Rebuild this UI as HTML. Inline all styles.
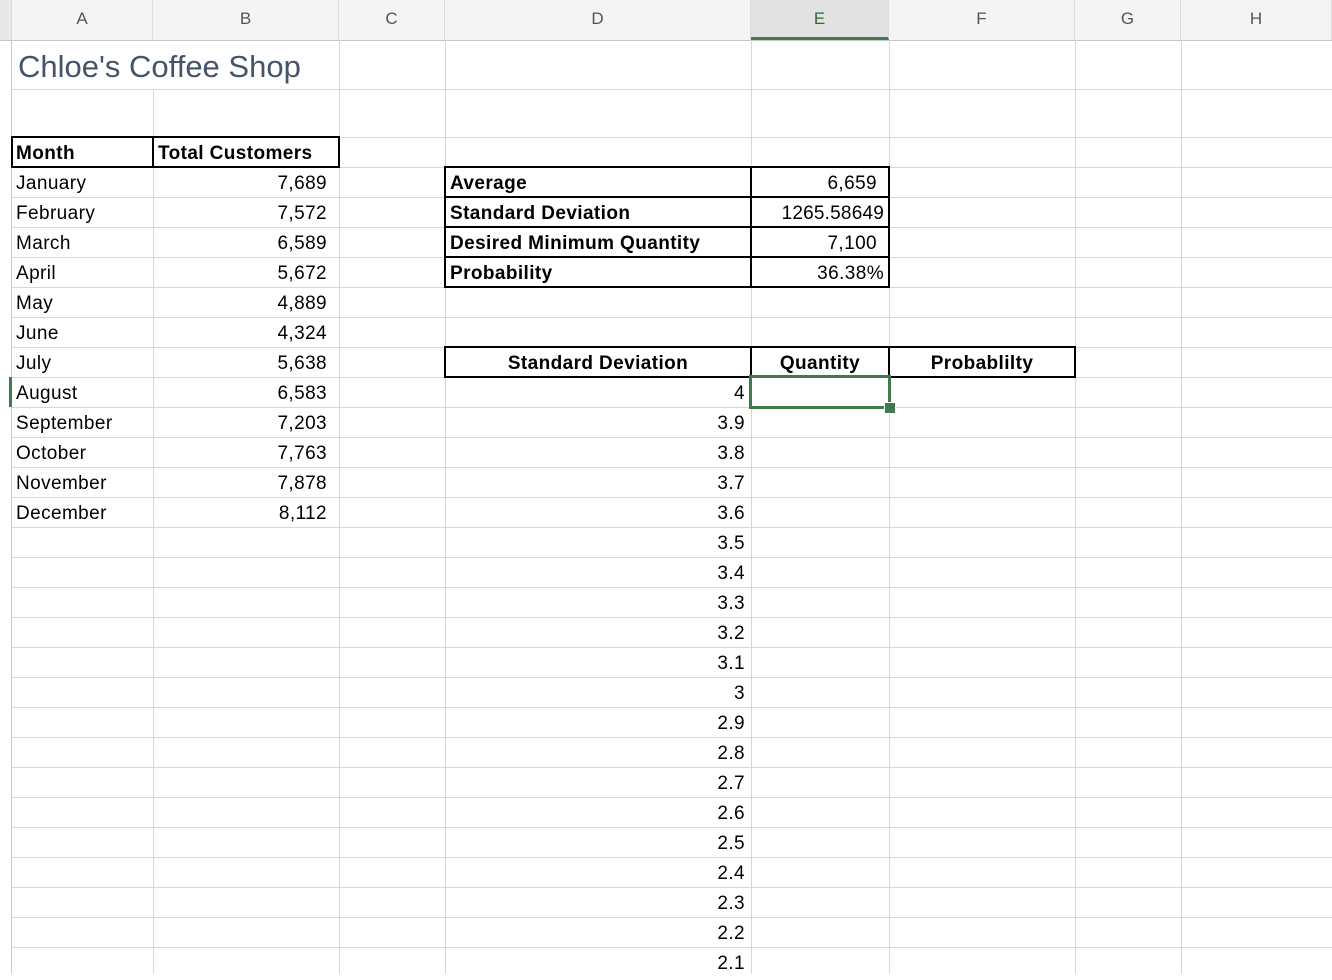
<!DOCTYPE html>
<html><head><meta charset="utf-8"><style>
body{margin:0;width:1332px;height:974px;overflow:hidden;background:#fff;position:relative;font-family:"Liberation Sans",Carlito,sans-serif;color:#000}
.hdr{position:absolute;top:0;left:0;width:1332px;height:40px;background:#f4f4f4;border-bottom:1px solid #c8c8c8}
.h{position:absolute;top:0;height:40px;line-height:38px;text-align:center;font-size:17px;color:#555;border-right:1px solid #dcdcdc;box-sizing:border-box}
.v{position:absolute;top:40px;bottom:0;width:1px;background:#d6d6d6}
.hl{position:absolute;left:12px;right:0;height:1px;background:#d6d6d6}
.c{position:absolute;height:30px;line-height:33px;font-size:19px;letter-spacing:0.4px;white-space:nowrap}
.r{text-align:right}
.b{font-weight:bold}
.box{position:absolute;border:2px solid #000;box-sizing:border-box}
.bl{position:absolute;background:#000}
</style></head><body>
<div class="hdr"></div>
<div class="h" style="left:0;width:12px;background:#e8e8e8"></div>
<div class="h" style="left:12px;width:141px">A</div>
<div class="h" style="left:153px;width:186px">B</div>
<div class="h" style="left:339px;width:106px">C</div>
<div class="h" style="left:445px;width:306px">D</div>
<div class="h" style="left:751px;width:138px;background:#e2e2e2;color:#2f6b3f;border-bottom:3px solid #3f7a4b">E</div>
<div class="h" style="left:889px;width:186px">F</div>
<div class="h" style="left:1075px;width:106px">G</div>
<div class="h" style="left:1181px;width:151px">H</div>

<div class="v" style="left:11px;background:#c8c8c8"></div>
<div class="v" style="left:153px;top:89px"></div>
<div class="v" style="left:339px"></div>
<div class="v" style="left:445px"></div>
<div class="v" style="left:751px"></div>
<div class="v" style="left:889px"></div>
<div class="v" style="left:1075px"></div>
<div class="v" style="left:1181px"></div>

<div class="hl" style="top:89px"></div>
<div class="hl" style="top:137px"></div>
<div class="hl" style="top:167px"></div><div class="hl" style="top:197px"></div><div class="hl" style="top:227px"></div><div class="hl" style="top:257px"></div><div class="hl" style="top:287px"></div><div class="hl" style="top:317px"></div><div class="hl" style="top:347px"></div><div class="hl" style="top:377px"></div><div class="hl" style="top:407px"></div><div class="hl" style="top:437px"></div><div class="hl" style="top:467px"></div><div class="hl" style="top:497px"></div><div class="hl" style="top:527px"></div><div class="hl" style="top:557px"></div><div class="hl" style="top:587px"></div><div class="hl" style="top:617px"></div><div class="hl" style="top:647px"></div><div class="hl" style="top:677px"></div><div class="hl" style="top:707px"></div><div class="hl" style="top:737px"></div><div class="hl" style="top:767px"></div><div class="hl" style="top:797px"></div><div class="hl" style="top:827px"></div><div class="hl" style="top:857px"></div><div class="hl" style="top:887px"></div><div class="hl" style="top:917px"></div><div class="hl" style="top:947px"></div>

<div style="position:absolute;left:12px;top:41px;width:326px;height:48px;background:#fff"></div>
<div class="c" style="left:18px;top:49px;font-size:31px;letter-spacing:0;line-height:36px;height:36px;color:#44546a">Chloe's Coffee Shop</div>

<div class="box" style="left:11px;top:136px;width:329px;height:32px"></div>
<div class="bl" style="left:152px;top:136px;width:2px;height:32px"></div>
<div class="c b" style="left:16px;top:137px">Month</div>
<div class="c b" style="left:158px;top:137px">Total Customers</div>

<div class="c" style="left:16px;top:167px">January</div><div class="c r" style="left:153px;width:174px;top:167px">7,689</div>
<div class="c" style="left:16px;top:197px">February</div><div class="c r" style="left:153px;width:174px;top:197px">7,572</div>
<div class="c" style="left:16px;top:227px">March</div><div class="c r" style="left:153px;width:174px;top:227px">6,589</div>
<div class="c" style="left:16px;top:257px">April</div><div class="c r" style="left:153px;width:174px;top:257px">5,672</div>
<div class="c" style="left:16px;top:287px">May</div><div class="c r" style="left:153px;width:174px;top:287px">4,889</div>
<div class="c" style="left:16px;top:317px">June</div><div class="c r" style="left:153px;width:174px;top:317px">4,324</div>
<div class="c" style="left:16px;top:347px">July</div><div class="c r" style="left:153px;width:174px;top:347px">5,638</div>
<div class="c" style="left:16px;top:377px">August</div><div class="c r" style="left:153px;width:174px;top:377px">6,583</div>
<div class="bl" style="left:9px;top:377px;width:3px;height:30px;background:#3f7a4b"></div>
<div class="c" style="left:16px;top:407px">September</div><div class="c r" style="left:153px;width:174px;top:407px">7,203</div>
<div class="c" style="left:16px;top:437px">October</div><div class="c r" style="left:153px;width:174px;top:437px">7,763</div>
<div class="c" style="left:16px;top:467px">November</div><div class="c r" style="left:153px;width:174px;top:467px">7,878</div>
<div class="c" style="left:16px;top:497px">December</div><div class="c r" style="left:153px;width:174px;top:497px">8,112</div>

<div class="box" style="left:444px;top:166px;width:446px;height:122px"></div>
<div class="bl" style="left:750px;top:166px;width:2px;height:122px"></div>
<div class="bl" style="left:444px;top:196px;width:446px;height:2px"></div>
<div class="bl" style="left:444px;top:226px;width:446px;height:2px"></div>
<div class="bl" style="left:444px;top:256px;width:446px;height:2px"></div>
<div class="c b" style="left:450px;top:167px">Average</div><div class="c r" style="left:751px;width:126px;top:167px">6,659</div>
<div class="c b" style="left:450px;top:197px">Standard Deviation</div><div class="c r" style="left:751px;width:133px;top:197px;letter-spacing:0.2px">1265.58649</div>
<div class="c b" style="left:450px;top:227px">Desired Minimum Quantity</div><div class="c r" style="left:751px;width:126px;top:227px">7,100</div>
<div class="c b" style="left:450px;top:257px">Probability</div><div class="c r" style="left:751px;width:133px;top:257px">36.38%</div>

<div class="box" style="left:444px;top:346px;width:632px;height:32px"></div>
<div class="bl" style="left:750px;top:346px;width:2px;height:32px"></div>
<div class="bl" style="left:888px;top:346px;width:2px;height:32px"></div>
<div class="c b" style="left:445px;width:306px;top:347px;text-align:center">Standard Deviation</div>
<div class="c b" style="left:751px;width:138px;top:347px;text-align:center">Quantity</div>
<div class="c b" style="left:889px;width:186px;top:347px;text-align:center">Probablilty</div>

<div style="position:absolute;left:749px;top:375px;width:142px;height:34px;border:3px solid #3f7a4b;box-sizing:border-box"></div>
<div style="position:absolute;left:884px;top:402px;width:10px;height:10px;background:#3f7a4b;border:1px solid #fff"></div>

<div class="c r" style="left:445px;width:300px;top:377px">4</div>
<div class="c r" style="left:445px;width:300px;top:407px">3.9</div>
<div class="c r" style="left:445px;width:300px;top:437px">3.8</div>
<div class="c r" style="left:445px;width:300px;top:467px">3.7</div>
<div class="c r" style="left:445px;width:300px;top:497px">3.6</div>
<div class="c r" style="left:445px;width:300px;top:527px">3.5</div>
<div class="c r" style="left:445px;width:300px;top:557px">3.4</div>
<div class="c r" style="left:445px;width:300px;top:587px">3.3</div>
<div class="c r" style="left:445px;width:300px;top:617px">3.2</div>
<div class="c r" style="left:445px;width:300px;top:647px">3.1</div>
<div class="c r" style="left:445px;width:300px;top:677px">3</div>
<div class="c r" style="left:445px;width:300px;top:707px">2.9</div>
<div class="c r" style="left:445px;width:300px;top:737px">2.8</div>
<div class="c r" style="left:445px;width:300px;top:767px">2.7</div>
<div class="c r" style="left:445px;width:300px;top:797px">2.6</div>
<div class="c r" style="left:445px;width:300px;top:827px">2.5</div>
<div class="c r" style="left:445px;width:300px;top:857px">2.4</div>
<div class="c r" style="left:445px;width:300px;top:887px">2.3</div>
<div class="c r" style="left:445px;width:300px;top:917px">2.2</div>
<div class="c r" style="left:445px;width:300px;top:947px">2.1</div>
</body></html>
